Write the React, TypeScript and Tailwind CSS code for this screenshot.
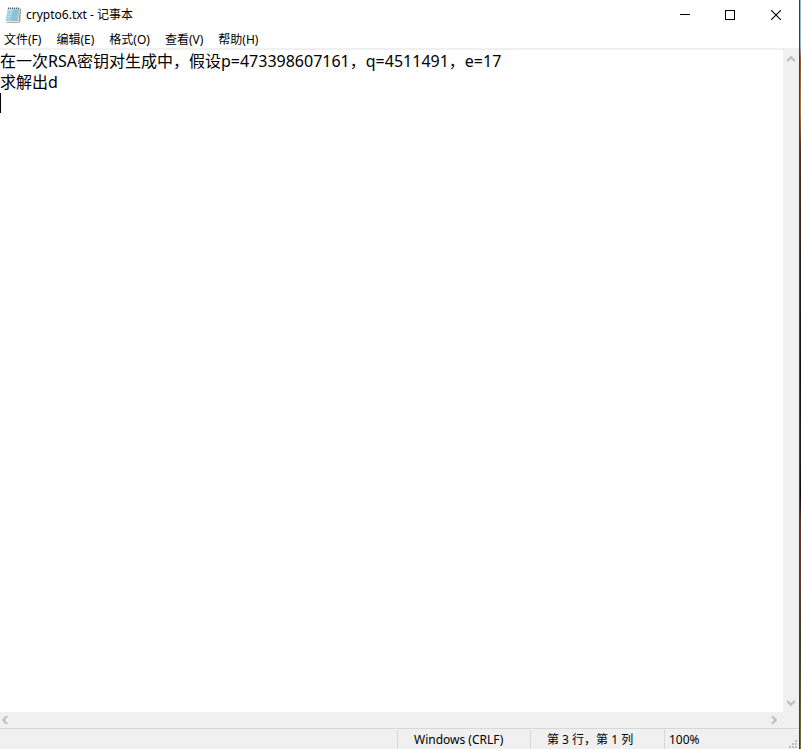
import React from "react";

const menus = ["文件(F)", "编辑(E)", "格式(O)", "查看(V)", "帮助(H)"];

const content =
  "在一次RSA密钥对生成中，假设p=473398607161，q=4511491，e=17\n求解出d\n";

interface ArrowProps {
  label: string;
  rotate: string;
}

const ScrollArrow: React.FC<ArrowProps> = ({ label, rotate }) => {
  return (
    <button
      type="button"
      aria-label={label}
      className="flex h-4 min-w-[10px] shrink-0 items-center justify-center"
    >
      <svg width="8" height="8" viewBox="0 0 8 8" className={rotate}>
        <path d="M0 4.6 4 .8l4 3.8v2.6L4 3.9 0 7.2z" fill="#bfbfbf" />
      </svg>
    </button>
  );
};

const NotepadIcon: React.FC = () => {
  return (
    <svg width="16" height="18" viewBox="0 0 16 18" className="shrink-0">
      <path d="M13.5 2.5H16L15.2 16l-2.4 1H1.5z" fill="#a8977a" />
      <path d="M3 2.5h11.8L13.6 16.3H.3z" fill="#f1f5f5" />
      <path d="M3 2.5h11.4L13 15.2H.6z" fill="#8fc8d8" />
      <path d="M3 2.5h5.5L5 15.2H.6z" fill="#b5e0e9" />
      <path
        d="M2.8 5.5h11M2.4 7.5h11M2 9.5h11M1.6 11.5h11M1.2 13.5h11"
        stroke="#7ab8c9"
        strokeWidth="0.5"
      />
      <path
        d="M3.5 1.5V3M5.5 1.5V3M7.5 1.5V3M9.5 1.5V3M11.5 1.5V3M13.5 1.5V3"
        stroke="#4b5b62"
        strokeWidth="1"
      />
    </svg>
  );
};

const TitleBar: React.FC = () => {
  return (
    <header className="flex h-[30px] shrink-0 items-center justify-between">
      <div className="flex items-center gap-[5px] pl-[5px]">
        <NotepadIcon />
        <h1>crypto6.txt - 记事本</h1>
      </div>
      <div className="flex h-full">
        <button type="button" aria-label="最小化" className="flex w-[45px] items-center justify-center">
          <svg width="10" height="10" shapeRendering="crispEdges">
            <path d="M0 4.5h10" stroke="#000" />
          </svg>
        </button>
        <button type="button" aria-label="最大化" className="flex w-[46px] items-center justify-center">
          <svg width="10" height="10" shapeRendering="crispEdges">
            <rect x="0.5" y="0.5" width="9" height="9" fill="none" stroke="#000" />
          </svg>
        </button>
        <button type="button" aria-label="关闭" className="flex w-[46px] items-center justify-center">
          <svg width="10" height="10">
            <path d="M0 0l10 10M10 0 0 10" stroke="#000" strokeWidth="1.1" />
          </svg>
        </button>
      </div>
    </header>
  );
};

const StatusBar: React.FC = () => {
  return (
    <footer className="flex h-[21px] shrink-0 justify-end border-t border-[#d7d7d7] bg-[#f0f0f0]">
      <div className="mt-px flex w-[133px] items-center border-l border-[#d7d7d7] pl-4">
        Windows (CRLF)
      </div>
      <div className="mt-px flex w-[134px] items-center border-l border-[#d7d7d7] pl-4">
        第 3 行，第 1 列
      </div>
      <div className="mt-px flex w-[135px] items-center justify-between border-l border-[#d7d7d7] pl-1">
        <span>100%</span>
        {/* Resize grip */}
        <svg width="8" height="8" className="mr-[2px] mb-px self-end" fill="#bfbfbf" shapeRendering="crispEdges">
          <path d="M6 0h2v2H6zM3 3h2v2H3zM6 3h2v2H6zM0 6h2v2H0zM3 6h2v2H3zM6 6h2v2H6z" />
        </svg>
      </div>
    </footer>
  );
};

const App: React.FC = () => {
  return (
    <div className="flex h-screen bg-white font-['Noto_Sans','Noto_Sans_CJK_SC',sans-serif] text-xs text-black">
      <div className="flex min-w-0 flex-1 flex-col">
        <TitleBar />

        {/* Menu */}
        <nav className="flex h-5 shrink-0 items-end gap-[15px] border-b-2 border-[#f0f0f0] pl-1">
          {menus.map((menu) => (
            <button key={menu} type="button">
              {menu}
            </button>
          ))}
        </nav>

        {/* Editor */}
        <main className="flex min-h-0 flex-1">
          <div className="relative min-w-0 flex-1">
            <textarea
              aria-label="文本编辑器"
              wrap="off"
              spellCheck={false}
              defaultValue={content}
              className="block h-full w-full resize-none overflow-hidden pt-px text-base leading-[21px] outline-none"
            />
            <span className="absolute left-0 top-[43px] h-5 w-px bg-black" />
          </div>
          <div className="flex w-4 shrink-0 flex-col justify-between bg-[#f0f0f0] py-px">
            <ScrollArrow label="向上滚动" rotate="rotate-0" />
            <ScrollArrow label="向下滚动" rotate="rotate-180" />
          </div>
        </main>
        <div className="flex h-4 shrink-0 items-center justify-between bg-[#f0f0f0] pr-5">
          <ScrollArrow label="向左滚动" rotate="-rotate-90" />
          <ScrollArrow label="向右滚动" rotate="rotate-90" />
        </div>

        <StatusBar />
      </div>

      {/* Desktop behind the window */}
      <div className="w-[2px] shrink-0 border-l border-[#3d3d3d] bg-[linear-gradient(#8fb9c8_0%,#8fb9c8_6%,#a0522d_8%,#b8752f_15%,#5a2a1c_20%,#2a2018_35%,#0c120e_50%,#1a2226_60%,#0a0a0a_66%,#6b3328_70%,#6b3a22_78%,#3a3a20_85%,#78702f_100%)]" />
    </div>
  );
};

export default App;
